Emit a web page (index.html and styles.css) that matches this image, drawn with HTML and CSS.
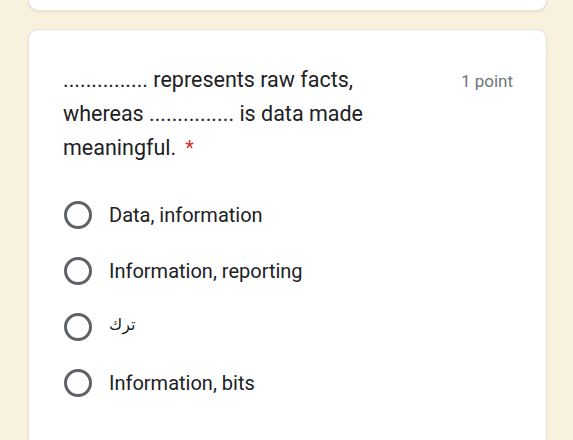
FILE: index.html
```html
<!DOCTYPE html>
<html>
<head>
<meta charset="utf-8">
<link rel="stylesheet" href="styles.css">
</head>
<body>
<div class="page">
  <div class="card card-prev"></div>
  <div class="card card-q">
    <div class="q-head">
      <div class="q-title">............... represents raw facts, whereas ............... is data made meaningful.<span class="req">*</span></div>
      <div class="q-points">1 point</div>
    </div>
    <div class="options">
      <label class="opt"><span class="radio"></span><span class="opt-text">Data, information</span></label>
      <label class="opt"><span class="radio"></span><span class="opt-text">Information, reporting</span></label>
      <label class="opt"><span class="radio"></span><span class="opt-text ar" dir="rtl">ترك</span></label>
      <label class="opt"><span class="radio"></span><span class="opt-text">Information, bits</span></label>
    </div>
  </div>
</div>
</body>
</html>
```
FILE: styles.css
```css
html, body {
  margin: 0;
  padding: 0;
  background: #f8f1dd;
  overflow: hidden;
}
.page {
  padding: 0 26px 0 28px;
  display: flex;
  flex-direction: column;
  gap: 18px;
}
.card {
  background: #ffffff;
  border: 1px solid #e6e1d3;
  border-radius: 10px;
  box-shadow: 0 1px 2px rgba(120, 110, 80, 0.12);
}
.card-prev {
  height: 10px;
  border-top: none;
  border-top-left-radius: 0;
  border-top-right-radius: 0;
}
.card-q {
  height: 430px;
  padding: 33px 33px 0 34px;
  box-sizing: border-box;
}
.q-head {
  display: flex;
  justify-content: space-between;
  align-items: flex-start;
}
.q-title {
  width: 340px;
  font-family: "Roboto", "Liberation Sans", sans-serif;
  font-size: 21.5px;
  line-height: 34px;
  color: #202124;
}
.req {
  color: #d93025;
  font-size: 20px;
  margin-left: 9px;
}
.q-points {
  font-family: "Roboto", "Liberation Sans", sans-serif;
  font-size: 17px;
  line-height: 34px;
  color: #70757a;
  padding-top: 1px;
}
.options {
  display: flex;
  flex-direction: column;
  margin-top: 22px;
}
.opt {
  display: flex;
  align-items: center;
  height: 56px;
  gap: 17px;
}
.radio {
  width: 22px;
  height: 22px;
  border: 3px solid #5f6368;
  border-radius: 50%;
  flex: none;
  margin-left: 1px;
}
.opt-text {
  font-family: "Roboto", "Liberation Sans", sans-serif;
  font-size: 20px;
  color: #202124;
}
.opt-text.ar {
  font-family: "DejaVu Sans", "Noto Sans", sans-serif;
  font-size: 16px;
  margin-top: -6px;
}
```
